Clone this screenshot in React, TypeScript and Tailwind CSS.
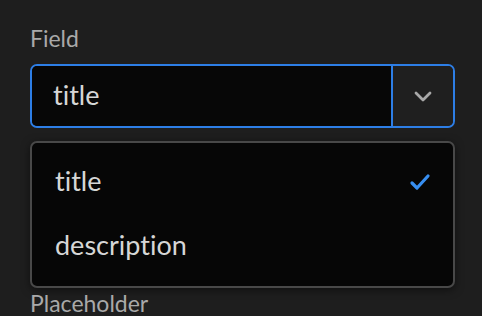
import React from 'react';

const fieldOptions = ['title', 'description'];

const ChevronDown = () => (
    <svg width="22" height="14" viewBox="0 0 22 14" fill="none">
        <path d="M4 4l7 7 7-7" stroke="#a8a8a8" strokeWidth="2.8" strokeLinecap="round" strokeLinejoin="round" />
    </svg>
);

const Check = () => (
    <svg width="22" height="18" viewBox="0 0 22 18" fill="none">
        <path d="M3 10l5 5L19 3" stroke="#378ef0" strokeWidth="3.2" strokeLinecap="round" strokeLinejoin="round" />
    </svg>
);

export default function App() {
    const selected = 'title';

    return (
        <div className="w-[482px] h-[316px] overflow-hidden bg-[#1e1e1e] px-[30px] pt-[24px] font-['Lato',sans-serif] [font-variant-ligatures:none]">
            {/* Label */}
            <div className="text-[23px] leading-[28px] text-[#a9a9a9]">Field</div>

            {/* Picker */}
            <div className="mt-[12px] flex h-[64px] w-[425px] rounded-[7px] border-2 border-[#2d7ee6] overflow-hidden">
                <div className="flex-1 flex items-center bg-[#070707] pl-[21px] pb-[2px] text-[27px] text-[#d6d6d6]">
                    {selected}
                </div>
                <div className="w-[62px] flex items-center justify-center border-l-2 border-[#2d7ee6] bg-[#1f1f1f]">
                    <ChevronDown />
                </div>
            </div>

            {/* Popover */}
            <div className="mt-[13px] w-[425px] h-[147px] rounded-[7px] border-2 border-[#484848] bg-[#060606] shadow-[0_2px_8px_rgba(0,0,0,0.5)] py-[8px]">
                {fieldOptions.map((opt) => (
                    <div key={opt} className="flex h-[64px] items-center justify-between pl-[23px] pr-[22px] pb-[3px] text-[27px] text-[#d6d6d6]">
                        <span>{opt}</span>
                        {opt === selected && <Check />}
                    </div>
                ))}
            </div>

            <div className="mt-[1px] text-[23px] leading-[28px] text-[#a9a9a9]">Placeholder</div>
        </div>
    );
}
